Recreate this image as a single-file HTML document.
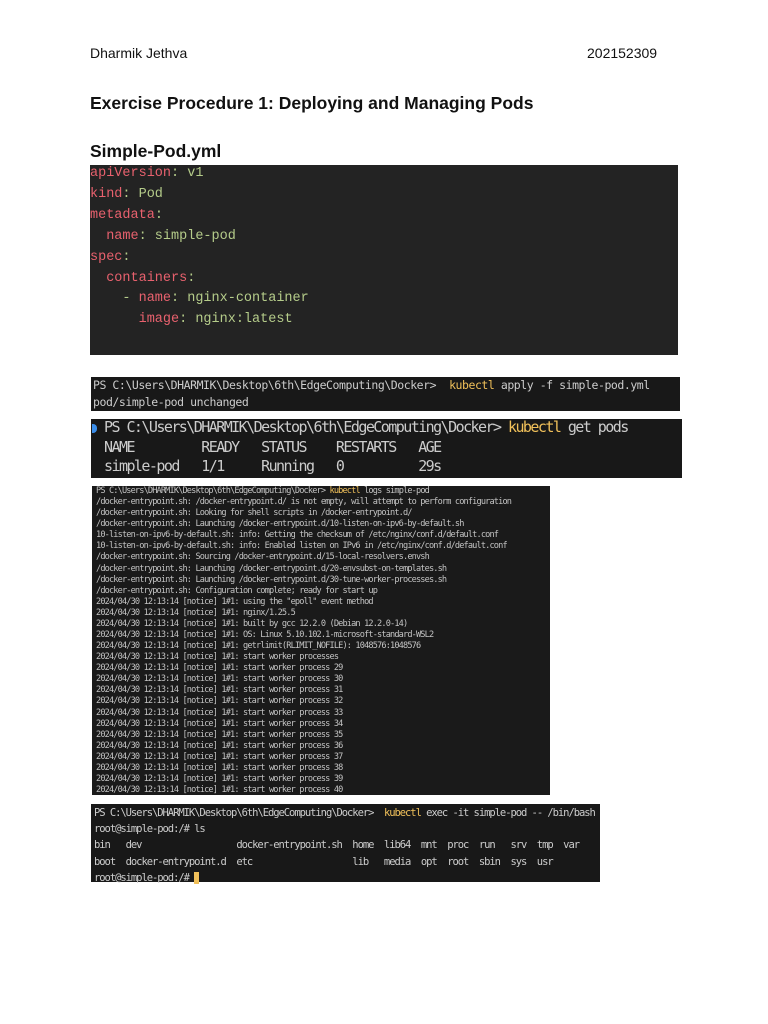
<!DOCTYPE html>
<html><head><meta charset="utf-8"><style>
body{margin:0;width:768px;height:1024px;background:#fff;position:relative;font-family:"Liberation Sans",sans-serif;color:#111;overflow:hidden}
.a{position:absolute;white-space:pre}
.box{position:absolute;background:#1f1f1f}
.m{font-family:"Liberation Mono",monospace}
.k{color:#e8616e}.v{color:#b5cc8a}.y{color:#f0c05a}
.t{color:#cccccc;font-family:"DejaVu Sans Mono","Liberation Mono",monospace}
</style></head><body>
<div class="a" style="left:90px;top:45px;font-size:14px">Dharmik Jethva</div>
<div class="a" style="left:587px;top:45px;font-size:14px">202152309</div>
<div class="a" style="left:90px;top:93px;font-size:17.5px;font-weight:bold">Exercise Procedure 1: Deploying and Managing Pods</div>
<div class="a" style="left:90px;top:141px;font-size:17.5px;font-weight:bold">Simple-Pod.yml</div>

<div class="box" style="left:90px;top:165px;width:588px;height:190px;background:#232323"></div>
<div class="a m" style="left:90px;top:164px;font-size:13.5px;line-height:20.9px"><span class="k">apiVersion</span><span class="v">: v1</span>
<span class="k">kind</span><span class="v">: Pod</span>
<span class="k">metadata</span><span class="v">:</span>
  <span class="k">name</span><span class="v">: simple-pod</span>
<span class="k">spec</span><span class="v">:</span>
  <span class="k">containers</span><span class="v">:</span>
    <span class="v">- </span><span class="k">name</span><span class="v">: nginx-container</span>
      <span class="k">image</span><span class="v">: nginx:latest</span></div>

<div class="box" style="left:91px;top:377px;width:589px;height:34px;background:#181818"></div>
<div class="a t" style="left:93px;top:377px;font-size:11.5px;line-height:17px;letter-spacing:-0.45px">PS C:\Users\DHARMIK\Desktop\6th\EdgeComputing\Docker>  <span class="y">kubectl</span> apply -f simple-pod.yml
pod/simple-pod unchanged</div>

<div class="box" style="left:91px;top:419px;width:591px;height:59px;background:#181818"></div>
<div class="a" style="left:92px;top:424px;width:5px;height:9px;background:#3b8eea;border-radius:0 4px 4px 0"></div>
<div class="a t" style="left:104px;top:418px;font-size:15px;line-height:19.5px;letter-spacing:-1.55px">PS C:\Users\DHARMIK\Desktop\6th\EdgeComputing\Docker> <span class="y">kubectl</span> get pods
NAME         READY   STATUS    RESTARTS   AGE
simple-pod   1/1     Running   0          29s</div>

<div class="box" style="left:92px;top:486px;width:458px;height:309px;background:#1a1a1a"></div>
<div class="a t" style="left:96px;top:486px;font-size:8.6px;line-height:11.08px;letter-spacing:-0.85px;color:#c4c4c4">PS C:\Users\DHARMIK\Desktop\6th\EdgeComputing\Docker> <span class="y">kubectl</span> logs simple-pod
/docker-entrypoint.sh: /docker-entrypoint.d/ is not empty, will attempt to perform configuration
/docker-entrypoint.sh: Looking for shell scripts in /docker-entrypoint.d/
/docker-entrypoint.sh: Launching /docker-entrypoint.d/10-listen-on-ipv6-by-default.sh
10-listen-on-ipv6-by-default.sh: info: Getting the checksum of /etc/nginx/conf.d/default.conf
10-listen-on-ipv6-by-default.sh: info: Enabled listen on IPv6 in /etc/nginx/conf.d/default.conf
/docker-entrypoint.sh: Sourcing /docker-entrypoint.d/15-local-resolvers.envsh
/docker-entrypoint.sh: Launching /docker-entrypoint.d/20-envsubst-on-templates.sh
/docker-entrypoint.sh: Launching /docker-entrypoint.d/30-tune-worker-processes.sh
/docker-entrypoint.sh: Configuration complete; ready for start up
2024/04/30 12:13:14 [notice] 1#1: using the "epoll" event method
2024/04/30 12:13:14 [notice] 1#1: nginx/1.25.5
2024/04/30 12:13:14 [notice] 1#1: built by gcc 12.2.0 (Debian 12.2.0-14)
2024/04/30 12:13:14 [notice] 1#1: OS: Linux 5.10.102.1-microsoft-standard-WSL2
2024/04/30 12:13:14 [notice] 1#1: getrlimit(RLIMIT_NOFILE): 1048576:1048576
2024/04/30 12:13:14 [notice] 1#1: start worker processes
2024/04/30 12:13:14 [notice] 1#1: start worker process 29
2024/04/30 12:13:14 [notice] 1#1: start worker process 30
2024/04/30 12:13:14 [notice] 1#1: start worker process 31
2024/04/30 12:13:14 [notice] 1#1: start worker process 32
2024/04/30 12:13:14 [notice] 1#1: start worker process 33
2024/04/30 12:13:14 [notice] 1#1: start worker process 34
2024/04/30 12:13:14 [notice] 1#1: start worker process 35
2024/04/30 12:13:14 [notice] 1#1: start worker process 36
2024/04/30 12:13:14 [notice] 1#1: start worker process 37
2024/04/30 12:13:14 [notice] 1#1: start worker process 38
2024/04/30 12:13:14 [notice] 1#1: start worker process 39
2024/04/30 12:13:14 [notice] 1#1: start worker process 40</div>

<div class="box" style="left:91px;top:804px;width:509px;height:78px;background:#181818"></div>
<div class="a t" style="left:94px;top:805px;font-size:10.5px;line-height:16.2px;letter-spacing:-1.05px">PS C:\Users\DHARMIK\Desktop\6th\EdgeComputing\Docker>  <span class="y">kubectl</span> exec -it simple-pod -- /bin/bash
root@simple-pod:/# ls
bin   dev                  docker-entrypoint.sh  home  lib64  mnt  proc  run   srv  tmp  var
boot  docker-entrypoint.d  etc                   lib   media  opt  root  sbin  sys  usr
root@simple-pod:/# <span style="background:#f0c05a">&nbsp;</span></div>
</body></html>
